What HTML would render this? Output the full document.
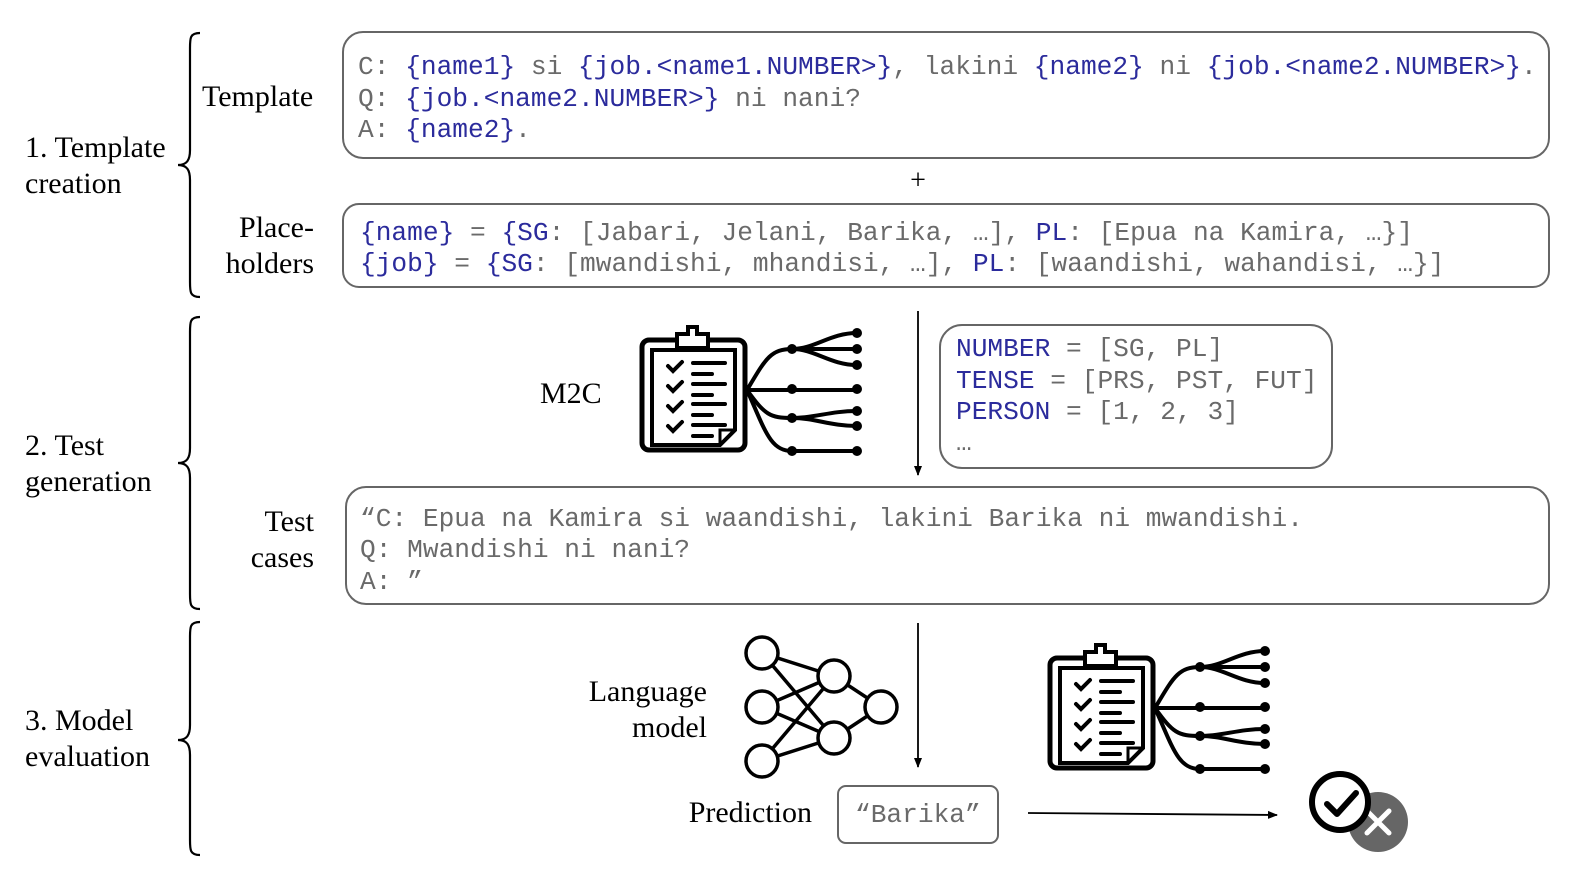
<!DOCTYPE html>
<html><head><meta charset="utf-8"><style>
html,body{margin:0;padding:0;background:#fff;}
svg{display:block}
.s{font-family:"Liberation Serif",serif;font-size:30px;fill:#000}
.m{font-family:"Liberation Mono",monospace;font-size:26.2px;fill:#6a6a6a}
.b{fill:#2b2b9c}
</style></head><body>
<svg width="1581" height="891" viewBox="0 0 1581 891" xmlns="http://www.w3.org/2000/svg">
<defs>
<marker id="ar" markerWidth="10" markerHeight="10" refX="9" refY="5" orient="auto" markerUnits="userSpaceOnUse"><path d="M0,1 L10,5 L0,9 Z" fill="#000"/></marker>
<g id="clip">
 <rect x="642" y="340" width="103" height="110" rx="7" fill="none" stroke="#000" stroke-width="5"/>
 <path d="M652 350 H735 V430 L720 445 H652 Z" fill="none" stroke="#000" stroke-width="4"/>
 <path d="M735 430 H720 V445" fill="none" stroke="#000" stroke-width="3"/>
 <path d="M677 340 V334 H688 V327 H697 V334 H708 V340 V348 H677 Z" fill="#fff" stroke="#000" stroke-width="4"/>
 <g fill="none" stroke="#000" stroke-width="4" stroke-linecap="round">
  <path d="M668 366 l5 5 l9 -9 M668 386 l5 5 l9 -9 M668 406 l5 5 l9 -9 M668 426 l5 5 l9 -9"/>
  <path d="M693 363 H725 M693 374 H712 M693 384 H725 M693 395 H712 M693 404 H725 M693 415 H712 M693 425 H725 M693 436 H712"/>
 </g>
 <g fill="none" stroke="#000" stroke-width="4">
  <path d="M747 390 C765 360 770 349 792 349 C815 349 830 333 857 333 M792 349 H857 M792 349 C815 349 830 365 857 365"/>
  <path d="M747 390 H857"/>
  <path d="M747 390 C765 415 770 418 792 418 C815 418 830 411 857 411 M792 418 C815 418 830 426 857 426"/>
  <path d="M747 390 C765 430 770 451 792 451 H857"/>
 </g>
 <g fill="#000">
  <circle cx="792" cy="349" r="5"/><circle cx="857" cy="333" r="5"/><circle cx="857" cy="349" r="5"/><circle cx="857" cy="365" r="5"/>
  <circle cx="792" cy="389" r="5"/><circle cx="857" cy="389" r="5"/>
  <circle cx="792" cy="418" r="5"/><circle cx="857" cy="411" r="5"/><circle cx="857" cy="426" r="5"/>
  <circle cx="792" cy="451" r="5"/><circle cx="857" cy="451" r="5"/>
 </g>
</g>
</defs>

<g fill="none" stroke="#000" stroke-width="2.2">
 <path d="M200 33 C190 33 190 38 190 48 V150 C190 160 187 165 178 165 C187 165 190 170 190 180 V282 C190 292 190 297 200 297"/>
 <path d="M200 317 C190 317 190 322 190 332 V448 C190 458 187 463 178 463 C187 463 190 468 190 478 V594 C190 604 190 609 200 609"/>
 <path d="M200 622 C190 622 190 627 190 637 V725 C190 735 187 740 178 740 C187 740 190 745 190 755 V840 C190 850 190 855 200 855"/>
</g>

<text class="s" x="25" y="157">1. Template</text>
<text class="s" x="25" y="193">creation</text>
<text class="s" x="202" y="106">Template</text>
<text class="s" x="314" y="237" text-anchor="end">Place-</text>
<text class="s" x="314" y="273" text-anchor="end">holders</text>

<rect x="343" y="32" width="1206" height="126" rx="20" fill="none" stroke="#666" stroke-width="2"/>
<text class="m" x="358" y="74">C: <tspan class="b">{name1}</tspan> si <tspan class="b">{job.&lt;name1.NUMBER&gt;}</tspan>, lakini <tspan class="b">{name2}</tspan> ni <tspan class="b">{job.&lt;name2.NUMBER&gt;}</tspan>.</text>
<text class="m" x="358" y="106">Q: <tspan class="b">{job.&lt;name2.NUMBER&gt;}</tspan> ni nani?</text>
<text class="m" x="358" y="137">A: <tspan class="b">{name2}</tspan>.</text>

<text class="s" x="918" y="189" text-anchor="middle" style="font-size:28px">+</text>

<rect x="343" y="204" width="1206" height="83" rx="16" fill="none" stroke="#666" stroke-width="2"/>
<text class="m" x="360" y="240"><tspan class="b">{name}</tspan> = <tspan class="b">{SG</tspan>: [Jabari, Jelani, Barika, …], <tspan class="b">PL</tspan>: [Epua na Kamira, …}]</text>
<text class="m" x="360" y="271"><tspan class="b">{job}</tspan>  = <tspan class="b">{SG</tspan>: [mwandishi, mhandisi, …], <tspan class="b">PL</tspan>: [waandishi, wahandisi, …}]</text>

<text class="s" x="540" y="403">M2C</text>
<use href="#clip"/>
<line x1="918" y1="311" x2="918" y2="475" stroke="#000" stroke-width="1.8" marker-end="url(#ar)"/>

<rect x="940" y="325" width="392" height="143" rx="22" fill="none" stroke="#666" stroke-width="2"/>
<text class="m" x="956" y="356"><tspan class="b">NUMBER</tspan> = [SG, PL]</text>
<text class="m" x="956" y="388"><tspan class="b">TENSE</tspan> = [PRS, PST, FUT]</text>
<text class="m" x="956" y="419"><tspan class="b">PERSON</tspan> = [1, 2, 3]</text>
<text class="m" x="956" y="450">…</text>

<text class="s" x="25" y="455">2. Test</text>
<text class="s" x="25" y="491">generation</text>
<text class="s" x="314" y="531" text-anchor="end">Test</text>
<text class="s" x="314" y="567" text-anchor="end">cases</text>

<rect x="346" y="487" width="1203" height="117" rx="20" fill="none" stroke="#666" stroke-width="2"/>
<text class="m" x="360" y="526">“C: Epua na Kamira si waandishi, lakini Barika ni mwandishi.</text>
<text class="m" x="360" y="557">Q: Mwandishi ni nani?</text>
<text class="m" x="360" y="589">A: ”</text>

<text class="s" x="25" y="730">3. Model</text>
<text class="s" x="25" y="766">evaluation</text>
<text class="s" x="707" y="701" text-anchor="end">Language</text>
<text class="s" x="707" y="737" text-anchor="end">model</text>

<g fill="none" stroke="#000" stroke-width="3.5">
 <path d="M762 653 L834 676 M762 653 L834 738 M762 707 L834 676 M762 707 L834 738 M762 761 L834 676 M762 761 L834 738 M834 676 L881 707 M834 738 L881 707"/>
 <g fill="#fff">
  <circle cx="762" cy="653" r="16"/><circle cx="762" cy="707" r="16"/><circle cx="762" cy="761" r="16"/>
  <circle cx="834" cy="676" r="16"/><circle cx="834" cy="738" r="16"/><circle cx="881" cy="707" r="16"/>
 </g>
</g>
<line x1="918" y1="623" x2="918" y2="767" stroke="#000" stroke-width="1.8" marker-end="url(#ar)"/>

<text class="s" x="812" y="822" text-anchor="end">Prediction</text>
<rect x="838" y="786" width="160" height="57" rx="8" fill="none" stroke="#666" stroke-width="2"/>
<text class="m" x="855" y="822">“Barika”</text>
<line x1="1028" y1="813" x2="1277" y2="815" stroke="#000" stroke-width="1.8" marker-end="url(#ar)"/>

<use href="#clip" transform="translate(408,318)"/>

<circle cx="1378" cy="822" r="30" fill="#666"/>
<path d="M1367 811 L1389 833 M1389 811 L1367 833" stroke="#fff" stroke-width="5" stroke-linecap="round"/>
<circle cx="1340" cy="802" r="28" fill="#fff" stroke="#000" stroke-width="6"/>
<path d="M1327 804 L1337 814 L1356 793" fill="none" stroke="#000" stroke-width="6" stroke-linecap="round" stroke-linejoin="round"/>
</svg>
</body></html>
